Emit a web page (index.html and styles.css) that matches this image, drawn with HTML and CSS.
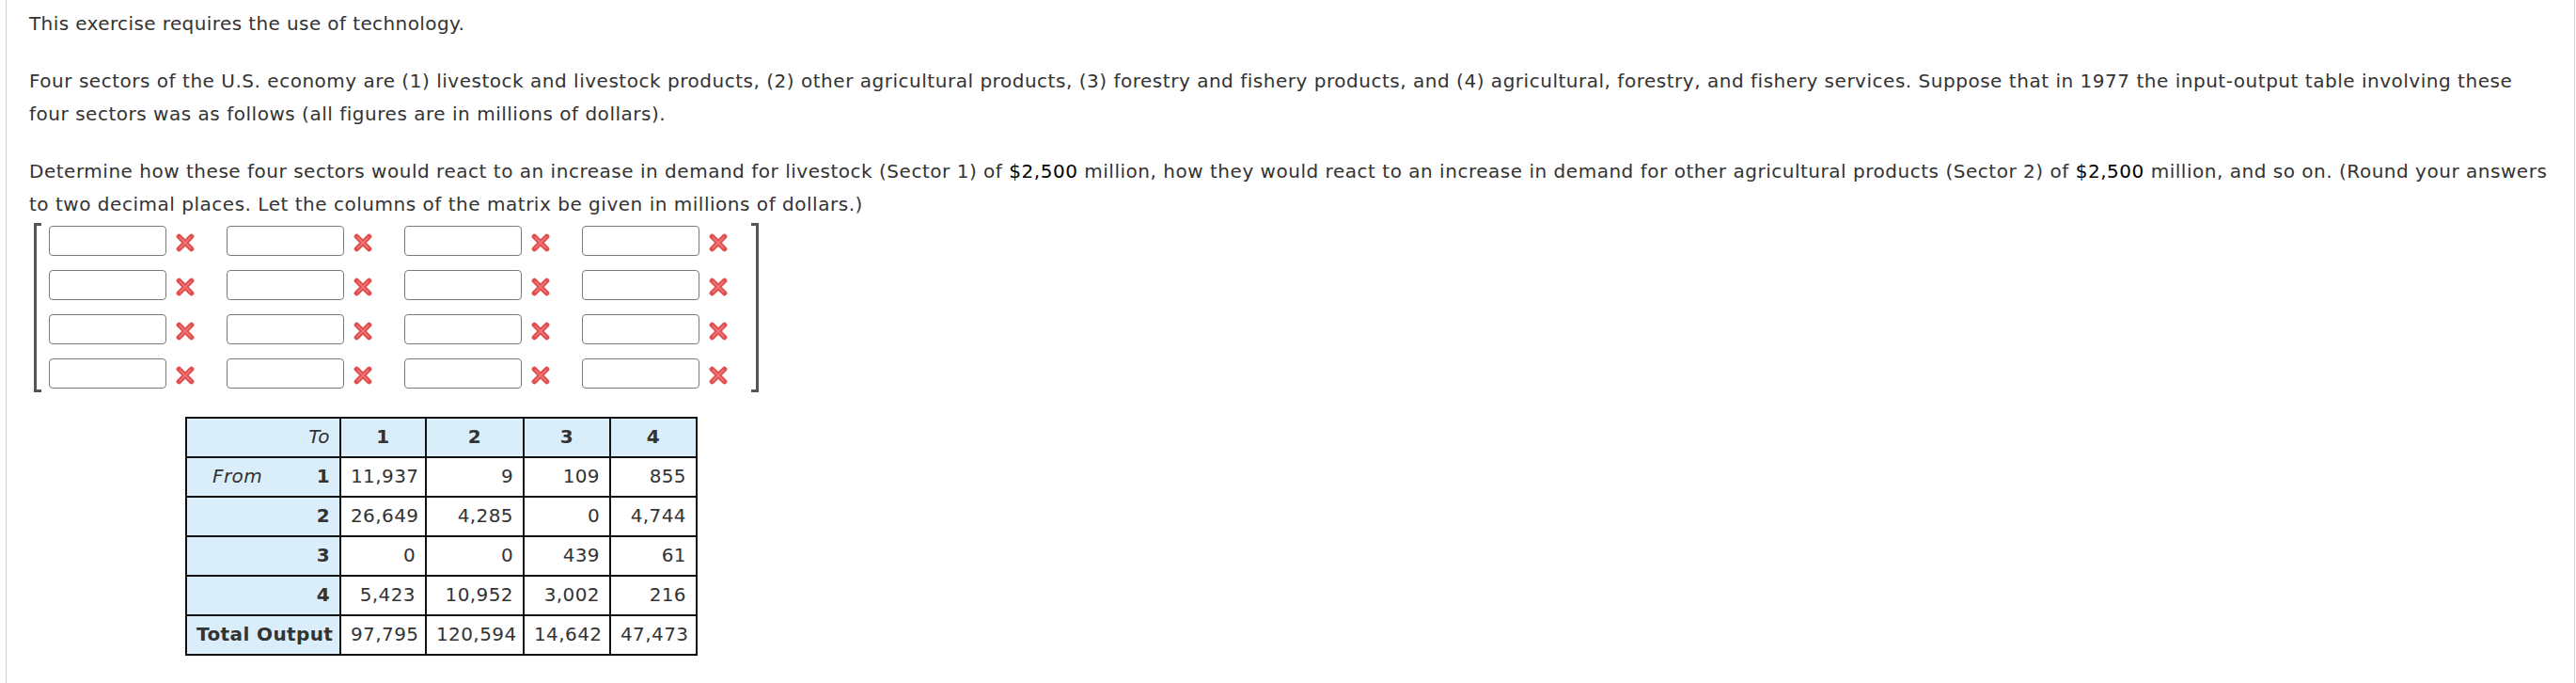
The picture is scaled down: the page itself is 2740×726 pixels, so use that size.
FILE: index.html
```html
<!DOCTYPE html>
<html lang="en">
<head>
<meta charset="utf-8">
<title>Input-output exercise</title>
<link rel="stylesheet" href="styles.css">
</head>
<body>
<div class="panel">
  <p class="intro">This exercise requires the use of technology.</p>
  <p class="para setup">Four sectors of the U.S. economy are (1) livestock and livestock products, (2) other agricultural products, (3) forestry and fishery products, and (4) agricultural, forestry, and fishery services. Suppose that in 1977 the input-output table involving these four sectors was as follows (all figures are in millions of dollars).</p>
  <p class="para question">Determine how these four sectors would react to an increase in demand for livestock (Sector 1) of <span class="val">$2,500</span> million, how they would react to an increase in demand for other agricultural products (Sector 2) of <span class="val">$2,500</span> million, and so on. (Round your answers to two decimal places. Let the columns of the matrix be given in millions of dollars.)</p>

  <div class="matrix">
    <div class="bracket bracket-left"></div>
    <div class="cells">
      <div class="cell"><input class="ans" type="text"><svg class="wrong" viewBox="0 0 20 20"><path class="xo" d="M4 4L16 16M16 4L4 16"/><path class="xi" d="M5 5L15 15M15 5L5 15"/></svg></div>
      <div class="cell"><input class="ans" type="text"><svg class="wrong" viewBox="0 0 20 20"><path class="xo" d="M4 4L16 16M16 4L4 16"/><path class="xi" d="M5 5L15 15M15 5L5 15"/></svg></div>
      <div class="cell"><input class="ans" type="text"><svg class="wrong" viewBox="0 0 20 20"><path class="xo" d="M4 4L16 16M16 4L4 16"/><path class="xi" d="M5 5L15 15M15 5L5 15"/></svg></div>
      <div class="cell"><input class="ans" type="text"><svg class="wrong" viewBox="0 0 20 20"><path class="xo" d="M4 4L16 16M16 4L4 16"/><path class="xi" d="M5 5L15 15M15 5L5 15"/></svg></div>
      <div class="cell"><input class="ans" type="text"><svg class="wrong" viewBox="0 0 20 20"><path class="xo" d="M4 4L16 16M16 4L4 16"/><path class="xi" d="M5 5L15 15M15 5L5 15"/></svg></div>
      <div class="cell"><input class="ans" type="text"><svg class="wrong" viewBox="0 0 20 20"><path class="xo" d="M4 4L16 16M16 4L4 16"/><path class="xi" d="M5 5L15 15M15 5L5 15"/></svg></div>
      <div class="cell"><input class="ans" type="text"><svg class="wrong" viewBox="0 0 20 20"><path class="xo" d="M4 4L16 16M16 4L4 16"/><path class="xi" d="M5 5L15 15M15 5L5 15"/></svg></div>
      <div class="cell"><input class="ans" type="text"><svg class="wrong" viewBox="0 0 20 20"><path class="xo" d="M4 4L16 16M16 4L4 16"/><path class="xi" d="M5 5L15 15M15 5L5 15"/></svg></div>
      <div class="cell"><input class="ans" type="text"><svg class="wrong" viewBox="0 0 20 20"><path class="xo" d="M4 4L16 16M16 4L4 16"/><path class="xi" d="M5 5L15 15M15 5L5 15"/></svg></div>
      <div class="cell"><input class="ans" type="text"><svg class="wrong" viewBox="0 0 20 20"><path class="xo" d="M4 4L16 16M16 4L4 16"/><path class="xi" d="M5 5L15 15M15 5L5 15"/></svg></div>
      <div class="cell"><input class="ans" type="text"><svg class="wrong" viewBox="0 0 20 20"><path class="xo" d="M4 4L16 16M16 4L4 16"/><path class="xi" d="M5 5L15 15M15 5L5 15"/></svg></div>
      <div class="cell"><input class="ans" type="text"><svg class="wrong" viewBox="0 0 20 20"><path class="xo" d="M4 4L16 16M16 4L4 16"/><path class="xi" d="M5 5L15 15M15 5L5 15"/></svg></div>
      <div class="cell"><input class="ans" type="text"><svg class="wrong" viewBox="0 0 20 20"><path class="xo" d="M4 4L16 16M16 4L4 16"/><path class="xi" d="M5 5L15 15M15 5L5 15"/></svg></div>
      <div class="cell"><input class="ans" type="text"><svg class="wrong" viewBox="0 0 20 20"><path class="xo" d="M4 4L16 16M16 4L4 16"/><path class="xi" d="M5 5L15 15M15 5L5 15"/></svg></div>
      <div class="cell"><input class="ans" type="text"><svg class="wrong" viewBox="0 0 20 20"><path class="xo" d="M4 4L16 16M16 4L4 16"/><path class="xi" d="M5 5L15 15M15 5L5 15"/></svg></div>
      <div class="cell"><input class="ans" type="text"><svg class="wrong" viewBox="0 0 20 20"><path class="xo" d="M4 4L16 16M16 4L4 16"/><path class="xi" d="M5 5L15 15M15 5L5 15"/></svg></div>
    </div>
    <div class="bracket bracket-right"></div>
  </div>

  <table class="io">
    <colgroup>
      <col class="c0"><col class="c1"><col class="c2"><col class="c3"><col class="c4">
    </colgroup>
    <tr class="head">
      <th class="side"><em>To</em></th>
      <th>1</th><th>2</th><th>3</th><th>4</th>
    </tr>
    <tr>
      <th class="side"><span class="split"><em class="from">From</em><b>1</b></span></th>
      <td>11,937</td><td>9</td><td>109</td><td>855</td>
    </tr>
    <tr>
      <th class="side"><span class="split"><span></span><b>2</b></span></th>
      <td>26,649</td><td>4,285</td><td>0</td><td>4,744</td>
    </tr>
    <tr>
      <th class="side"><span class="split"><span></span><b>3</b></span></th>
      <td>0</td><td>0</td><td>439</td><td>61</td>
    </tr>
    <tr>
      <th class="side"><span class="split"><span></span><b>4</b></span></th>
      <td>5,423</td><td>10,952</td><td>3,002</td><td>216</td>
    </tr>
    <tr>
      <th class="side"><span class="split"><span></span><b>Total Output</b></span></th>
      <td>97,795</td><td>120,594</td><td>14,642</td><td>47,473</td>
    </tr>
  </table>
</div>
</body>
</html>
```

FILE: styles.css
```css
html, body {
  margin: 0;
  padding: 0;
  background: #ffffff;
}

body {
  font-family: "DejaVu Sans", Verdana, sans-serif;
  font-size: 20px;
  letter-spacing: 0.4px;
  line-height: 23.5px;
  color: #333333;
}

.panel {
  margin: 0 1px 0 6px;
  border-left: 1px solid #cfcfcf;
  border-right: 1px solid #cfcfcf;
  padding: 14px 28px 29px 24px;
  min-height: 683px;
  box-sizing: border-box;
}

.intro {
  margin: 0;
}

.para {
  margin: 0;
  line-height: 35.5px;
  letter-spacing: 0.52px;
}

.setup {
  margin-top: 31px;
}

.question {
  margin-top: 25px;
}

.val {
  color: #000000;
}

/* matrix */
.matrix {
  display: flex;
  margin: 1px 0 0 5px;
  height: 180px;
}

.bracket {
  width: 8px;
  box-sizing: border-box;
  border-top: 3px solid #555555;
  border-bottom: 3px solid #555555;
}

.bracket-left {
  border-left: 3px solid #555555;
}

.bracket-right {
  border-right: 3px solid #555555;
}

.cells {
  display: grid;
  grid-template-columns: repeat(4, auto);
  column-gap: 33px;
  row-gap: 15px;
  padding: 3px 24px 0 8px;
  align-content: start;
}

.cell {
  display: flex;
  align-items: center;
  gap: 9px;
  height: 32px;
}

.ans {
  width: 125px;
  height: 32px;
  box-sizing: border-box;
  border: 1px solid #7a7a7a;
  border-radius: 4px;
  background: #ffffff;
  margin: 0;
  padding: 0 6px;
  font: inherit;
}

.wrong {
  width: 22px;
  height: 22px;
  margin-top: 5px;
  fill: none;
  stroke-linecap: round;
}

.wrong .xo {
  stroke: #e14f4f;
  stroke-width: 5;
}

.wrong .xi {
  stroke: #ee7676;
  stroke-width: 1.6;
}

/* table */
.io {
  margin: 26px 0 0 166px;
  border-collapse: collapse;
  table-layout: fixed;
  width: 543px;
}

.c0 { width: 164px; }
.c1 { width: 91px; }
.c2 { width: 104px; }
.c3 { width: 92px; }
.c4 { width: 92px; }

.io th,
.io td {
  border: 2px solid #111111;
  padding: 8.5px 10px;
  line-height: 23px;
  font-weight: normal;
  text-align: right;
  white-space: nowrap;
}

.io th {
  background: #d9eefa;
}

.io .head th {
  font-weight: bold;
  text-align: center;
}

.io .head th.side {
  font-weight: normal;
  text-align: right;
}

.io td {
  background: #ffffff;
}

.split {
  display: flex;
  justify-content: space-between;
}

.from {
  padding-left: 17px;
}

.io em {
  font-style: italic;
}
```
